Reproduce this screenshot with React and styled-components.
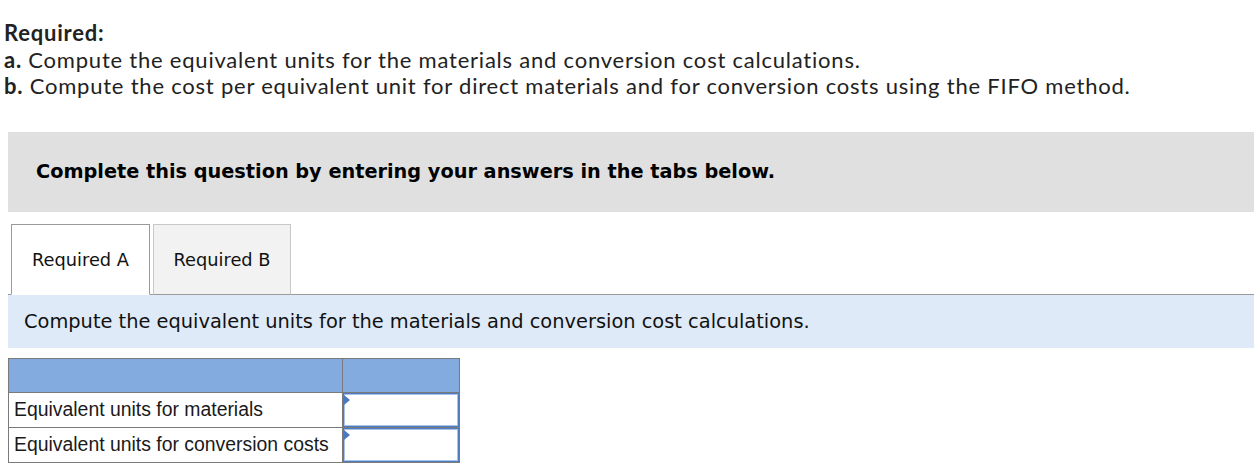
import React from "react"
import styled, { createGlobalStyle } from "styled-components"

const GlobalStyle = createGlobalStyle`
  body {
    margin: 0;
    background: #ffffff;
    color: #1a1a1a;
  }
`

const Page = styled.div`
  width: 1254px;
  padding-top: 20px;
`

const Intro = styled.div`
  padding-left: 4px;
  font-family: "Lato", "Open Sans", sans-serif;
  font-size: 22px;
  letter-spacing: 0.78px;
  line-height: 26.5px;
  color: #222222;
`

const Line = styled.div`
  white-space: nowrap;
`

const Strong = styled.span`
  font-weight: 700;
`

const Notice = styled.div`
  display: flex;
  align-items: center;
  margin: 32px 0 0 8px;
  height: 80px;
  padding-left: 28px;
  background: #e0e0e0;
  font-family: "DejaVu Sans", Verdana, sans-serif;
  font-weight: 700;
  font-size: 19.3px;
  color: #000000;
  white-space: nowrap;
`

const TabBar = styled.div`
  display: flex;
  gap: 3px;
  margin: 12px 0 0 8px;
  padding-left: 3px;
  border-bottom: 1px solid #9a9a9a;
`

const Tab = styled.div`
  display: flex;
  align-items: center;
  justify-content: center;
  width: ${props => props.width}px;
  height: 71px;
  box-sizing: border-box;
  margin-bottom: -1px;
  font-family: "DejaVu Sans", Verdana, sans-serif;
  font-size: 17.8px;
  color: #111111;
  background: ${props => (props.active ? "#ffffff" : "#f2f2f2")};
  border: 1px solid ${props => (props.active ? "#9a9a9a" : "#c8c8c8")};
  border-bottom: ${props => (props.active ? "1px solid #ffffff" : "1px solid #9a9a9a")};
`

const Instruction = styled.div`
  display: flex;
  align-items: center;
  margin-left: 8px;
  height: 53px;
  padding-left: 16px;
  background: #deeaf7;
  font-family: "DejaVu Sans", Verdana, sans-serif;
  font-size: 19.4px;
  color: #111111;
  white-space: nowrap;
`

const Table = styled.table`
  margin: 10px 0 0 8px;
  border-collapse: collapse;
  font-family: "Liberation Sans", Arial, sans-serif;
  font-size: 19.4px;
  color: #1a1a1a;
`

const HeadCell = styled.td`
  height: 33px;
  padding: 0;
  background: #84abdf;
  border: 1px solid #7a7a7a;
  width: ${props => props.width}px;
`

const LabelCell = styled.td`
  height: 34px;
  padding: 0 0 0 5px;
  border: 1px solid #7a7a7a;
  white-space: nowrap;
`

const InputCell = styled.td`
  position: relative;
  height: 34px;
  padding: 0;
  border: 1px solid #7a7a7a;
`

const AnswerBox = styled.input`
  display: block;
  box-sizing: border-box;
  width: 100%;
  height: 34px;
  margin: 0;
  border: 1px solid #4f7bc1;
  box-shadow: inset 0 0 0 1px #a9c2e9;
  outline: none;
  background: #ffffff;
`

const Flag = styled.span`
  position: absolute;
  top: 2px;
  left: 1px;
  width: 0;
  height: 0;
  border-top: 5px solid transparent;
  border-bottom: 5px solid transparent;
  border-left: 6px solid #4a78c2;
`

const rows = ["Equivalent units for materials", "Equivalent units for conversion costs"]

export default function App() {
  return (
    <Page>
      <GlobalStyle />
      <Intro>
        <Line>
          <Strong>Required:</Strong>
        </Line>
        <Line>
          <Strong>a.</Strong> Compute the equivalent units for the materials and conversion cost calculations.
        </Line>
        <Line>
          <Strong>b.</Strong> Compute the cost per equivalent unit for direct materials and for conversion costs using the FIFO method.
        </Line>
      </Intro>
      <Notice>Complete this question by entering your answers in the tabs below.</Notice>
      <TabBar>
        <Tab active width={139}>Required A</Tab>
        <Tab width={138}>Required B</Tab>
      </TabBar>
      <Instruction>Compute the equivalent units for the materials and conversion cost calculations.</Instruction>
      <Table>
        <tbody>
          <tr>
            <HeadCell width={333} />
            <HeadCell width={116} />
          </tr>
          {rows.map(label => (
            <tr key={label}>
              <LabelCell>{label}</LabelCell>
              <InputCell>
                <AnswerBox type="text" />
                <Flag />
              </InputCell>
            </tr>
          ))}
        </tbody>
      </Table>
    </Page>
  )
}
